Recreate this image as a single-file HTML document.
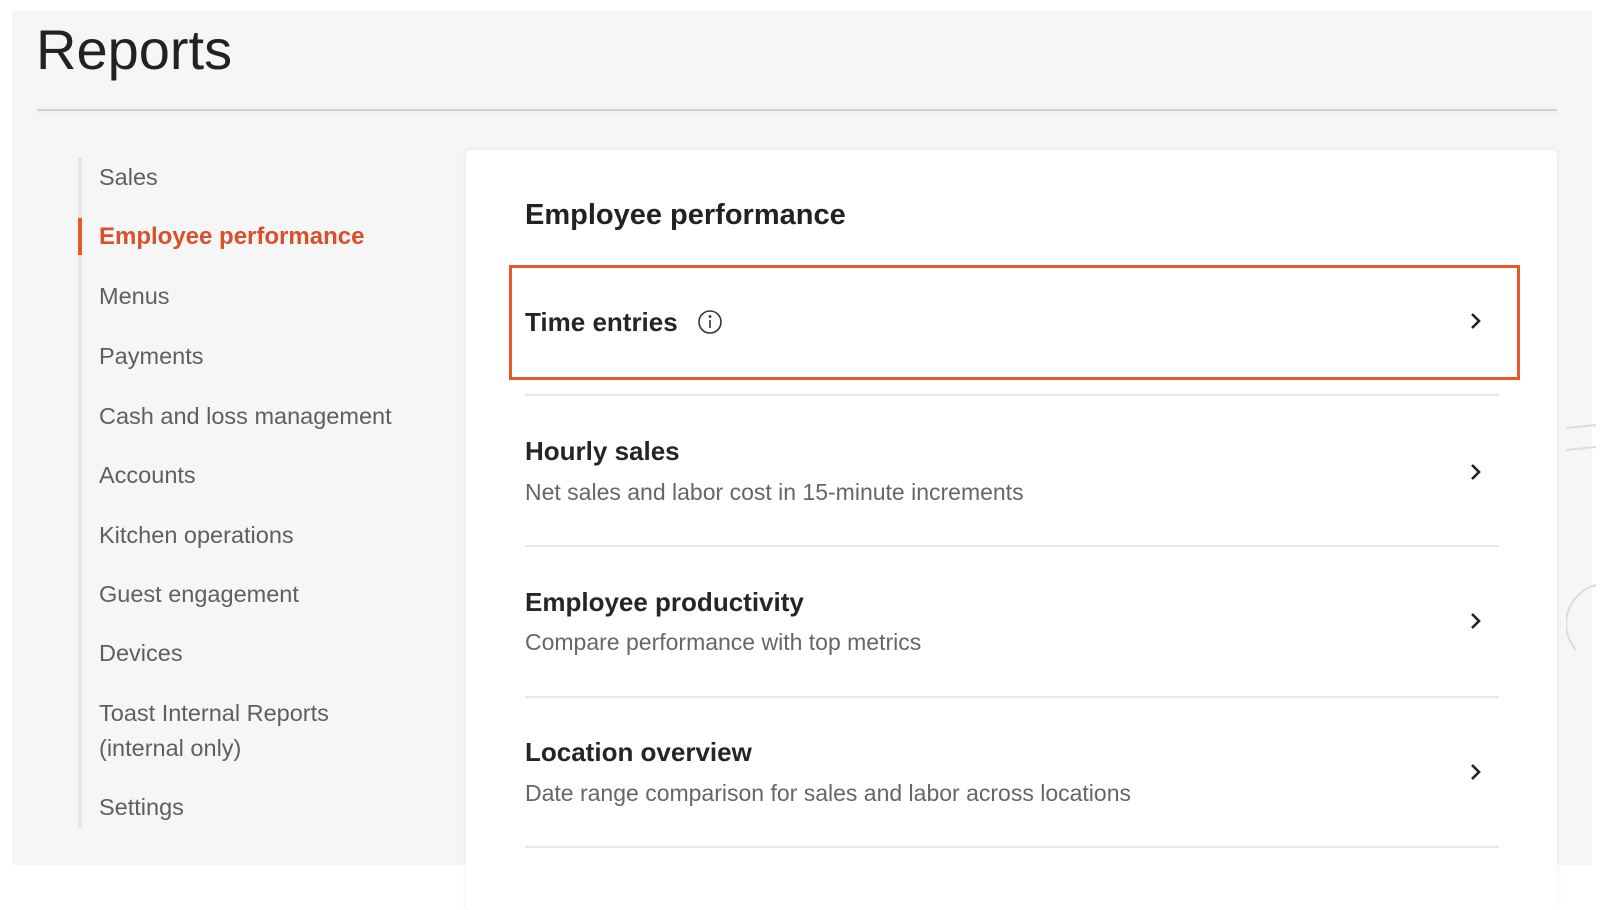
<!DOCTYPE html>
<html><head><meta charset="utf-8"><style>
*{margin:0;padding:0;box-sizing:border-box}
body{width:1610px;height:880px;background:#fff;position:relative;overflow:hidden;font-family:"Liberation Sans",sans-serif;color:#252525}
.bg{position:absolute;left:12px;top:10px;width:1580px;height:855px;background:#f6f6f6}
.title{position:absolute;left:36px;top:18px;font-size:56px;line-height:64px;color:#222}
.hline{position:absolute;left:37px;top:109px;width:1520px;height:2px;background:#cfcfcf;box-shadow:0 3px 4px rgba(0,0,0,.06)}
.sbar{position:absolute;left:78px;top:158px;width:4px;height:670px;background:#e6e6e6}
.sact{position:absolute;left:78px;top:218px;width:4px;height:37px;background:#e8582a}
.si{position:absolute;left:99px;font-size:23.5px;line-height:30px;color:#5f5f5f;transform:translateY(-15px)}
.si.a{color:#d9502a;font-weight:bold;font-size:24px}
.card{position:absolute;left:466px;top:150px;width:1091px;height:760px;background:#fff;border-radius:5px;box-shadow:0 0 6px rgba(0,0,0,.07)}
.h{position:absolute;left:525px;font-weight:bold;font-size:29px;line-height:34px;transform:translateY(-17px);color:#222}
.rt{position:absolute;left:525px;font-weight:bold;font-size:26px;line-height:30px;transform:translateY(-15px);color:#252525}
.rs{position:absolute;left:525px;font-size:23px;line-height:28px;transform:translateY(-14px);color:#666}
.box{position:absolute;left:509px;top:265px;width:1011px;height:115px;border:3px solid #e8582a}
.div{position:absolute;left:525px;width:974px;height:2px;background:#e8e8e8}
.chev{position:absolute;left:1469px;width:14px;height:20px;transform:translateY(-10px)}
.deco{position:absolute;left:1566px;top:380px}
</style></head><body>
<div class="bg"></div>
<div class="title">Reports</div>
<div class="hline"></div>
<div class="sbar"></div><div class="sact"></div>
<div class="si" style="top:177px">Sales</div>
<div class="si a" style="top:237px">Employee performance</div>
<div class="si" style="top:296px">Menus</div>
<div class="si" style="top:356px">Payments</div>
<div class="si" style="top:416px">Cash and loss management</div>
<div class="si" style="top:475px">Accounts</div>
<div class="si" style="top:535px">Kitchen operations</div>
<div class="si" style="top:594px">Guest engagement</div>
<div class="si" style="top:653px">Devices</div>
<div class="si" style="top:713px">Toast Internal Reports</div>
<div class="si" style="top:748px">(internal only)</div>
<div class="si" style="top:807px">Settings</div>
<svg class="deco" width="30" height="450" viewBox="0 0 30 450" fill="none" stroke="#dcdcdc" stroke-width="2"><path d="M0 48 L30 45 M0 70 L30 67"/><path d="M30 205 A40 40 0 0 0 10 270"/><path d="M30 340 A30 30 0 0 1 30 410"/></svg>
<div class="card"></div>
<div class="h" style="top:215px">Employee performance</div>
<div class="box"></div>
<div class="rt" style="top:322px">Time entries</div>
<svg style="position:absolute;left:697px;top:309px" width="26" height="26" viewBox="0 0 26 26" fill="none" stroke="#333" stroke-width="1.6"><circle cx="13" cy="13" r="11"/><path d="M13 11v8"/><circle cx="13" cy="7.5" r="0.6" fill="#333"/></svg>
<svg class="chev" style="top:321px" viewBox="0 0 14 20" fill="none" stroke="#222" stroke-width="2.6"><path d="M3 3l7 7-7 7"/></svg>
<div class="div" style="top:394px"></div>
<div class="rt" style="top:451px">Hourly sales</div>
<div class="rs" style="top:492px">Net sales and labor cost in 15-minute increments</div>
<svg class="chev" style="top:472px" viewBox="0 0 14 20" fill="none" stroke="#222" stroke-width="2.6"><path d="M3 3l7 7-7 7"/></svg>
<div class="div" style="top:545px"></div>
<div class="rt" style="top:602px">Employee productivity</div>
<div class="rs" style="top:642px">Compare performance with top metrics</div>
<svg class="chev" style="top:621px" viewBox="0 0 14 20" fill="none" stroke="#222" stroke-width="2.6"><path d="M3 3l7 7-7 7"/></svg>
<div class="div" style="top:696px"></div>
<div class="rt" style="top:752px">Location overview</div>
<div class="rs" style="top:793px">Date range comparison for sales and labor across locations</div>
<svg class="chev" style="top:772px" viewBox="0 0 14 20" fill="none" stroke="#222" stroke-width="2.6"><path d="M3 3l7 7-7 7"/></svg>
<div class="div" style="top:846px"></div>
</body></html>
